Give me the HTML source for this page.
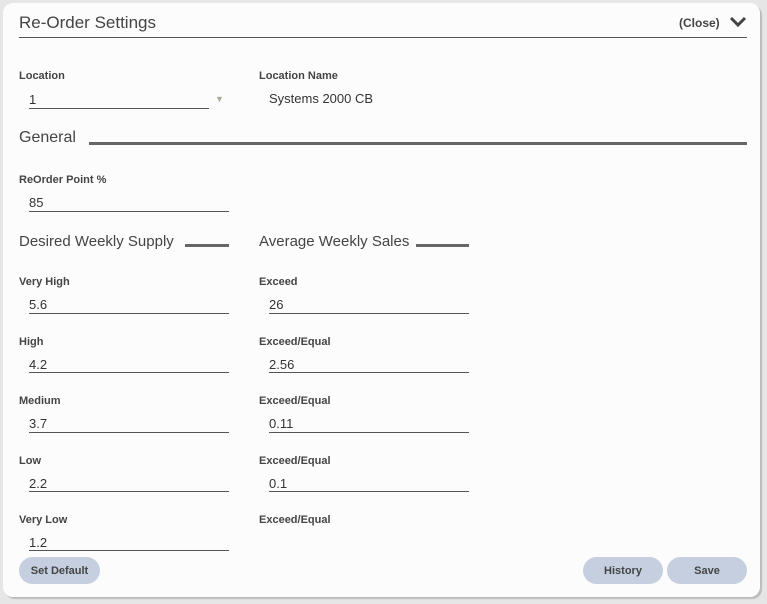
<!DOCTYPE html>
<html><head><style>
body{margin:0;width:767px;height:604px;background:#e6e6e6;font-family:"Liberation Sans",sans-serif;position:relative;overflow:hidden}
.panel{position:absolute;left:3px;top:3px;width:757px;height:594px;background:#fcfcfc;border-radius:10px;box-shadow:2px 2px 1px #bbb}
.a{position:absolute;white-space:nowrap}
.lbl{font-size:11px;font-weight:bold;color:#444}
.val{font-size:13px;color:#333}
.ul{position:absolute;height:1px;background:#555}
.h{font-size:15px;color:#444}
.btn{position:absolute;top:557px;height:27px;background:#c5cfdf;border-radius:14px;font-size:11px;font-weight:bold;color:#444;text-align:center;line-height:29px}
</style></head><body>
<div class="panel"></div>
<div class="a" style="left:19px;top:13px;font-size:17px;color:#444">Re-Order Settings</div>
<div class="a" style="left:679px;top:16px;font-size:12px;font-weight:bold;color:#444">(Close)</div>
<svg class="a" style="left:729px;top:16px" width="18" height="12"><path d="M2 2 L9 9 L16 2" stroke="#444" stroke-width="3" fill="none"/></svg>
<div class="ul" style="left:19px;top:37px;width:728px"></div>

<div class="a lbl" style="left:19px;top:70px">Location</div>
<div class="a val" style="left:29px;top:92px">1</div>
<div class="ul" style="left:29px;top:108px;width:180px"></div>
<div class="a" style="left:215px;top:94px;font-size:9px;color:#a5ab95">▼</div>
<div class="a lbl" style="left:259px;top:70px">Location Name</div>
<div class="a val" style="left:269px;top:91px">Systems 2000 CB</div>

<div class="a h" style="left:19px;top:129px;font-size:16px">General</div>
<div class="a" style="left:89px;top:142px;width:658px;height:3px;background:#666"></div>

<div class="a lbl" style="left:19px;top:174px">ReOrder Point %</div>
<div class="a val" style="left:29px;top:195px">85</div>
<div class="ul" style="left:29px;top:211px;width:200px"></div>

<div class="a h" style="left:19px;top:233px">Desired Weekly Supply</div>
<div class="a" style="left:185px;top:244px;width:44px;height:3px;background:#666"></div>
<div class="a h" style="left:259px;top:233px">Average Weekly Sales</div>
<div class="a" style="left:416px;top:244px;width:53px;height:3px;background:#666"></div>

<div class="a lbl" style="left:19px;top:276px">Very High</div>
<div class="a val" style="left:29px;top:297px">5.6</div>
<div class="ul" style="left:29px;top:313px;width:200px"></div>
<div class="a lbl" style="left:259px;top:276px">Exceed</div>
<div class="a val" style="left:269px;top:297px">26</div>
<div class="ul" style="left:269px;top:313px;width:200px"></div>

<div class="a lbl" style="left:19px;top:336px">High</div>
<div class="a val" style="left:29px;top:357px">4.2</div>
<div class="ul" style="left:29px;top:372px;width:200px"></div>
<div class="a lbl" style="left:259px;top:336px">Exceed/Equal</div>
<div class="a val" style="left:269px;top:357px">2.56</div>
<div class="ul" style="left:269px;top:372px;width:200px"></div>

<div class="a lbl" style="left:19px;top:395px">Medium</div>
<div class="a val" style="left:29px;top:416px">3.7</div>
<div class="ul" style="left:29px;top:432px;width:200px"></div>
<div class="a lbl" style="left:259px;top:395px">Exceed/Equal</div>
<div class="a val" style="left:269px;top:416px">0.11</div>
<div class="ul" style="left:269px;top:432px;width:200px"></div>

<div class="a lbl" style="left:19px;top:455px">Low</div>
<div class="a val" style="left:29px;top:476px">2.2</div>
<div class="ul" style="left:29px;top:491px;width:200px"></div>
<div class="a lbl" style="left:259px;top:455px">Exceed/Equal</div>
<div class="a val" style="left:269px;top:476px">0.1</div>
<div class="ul" style="left:269px;top:491px;width:200px"></div>

<div class="a lbl" style="left:19px;top:514px">Very Low</div>
<div class="a val" style="left:29px;top:535px">1.2</div>
<div class="ul" style="left:29px;top:550px;width:200px"></div>
<div class="a lbl" style="left:259px;top:514px">Exceed/Equal</div>

<div class="btn" style="left:19px;width:81px">Set Default</div>
<div class="btn" style="left:583px;width:80px">History</div>
<div class="btn" style="left:667px;width:80px">Save</div>
</body></html>
